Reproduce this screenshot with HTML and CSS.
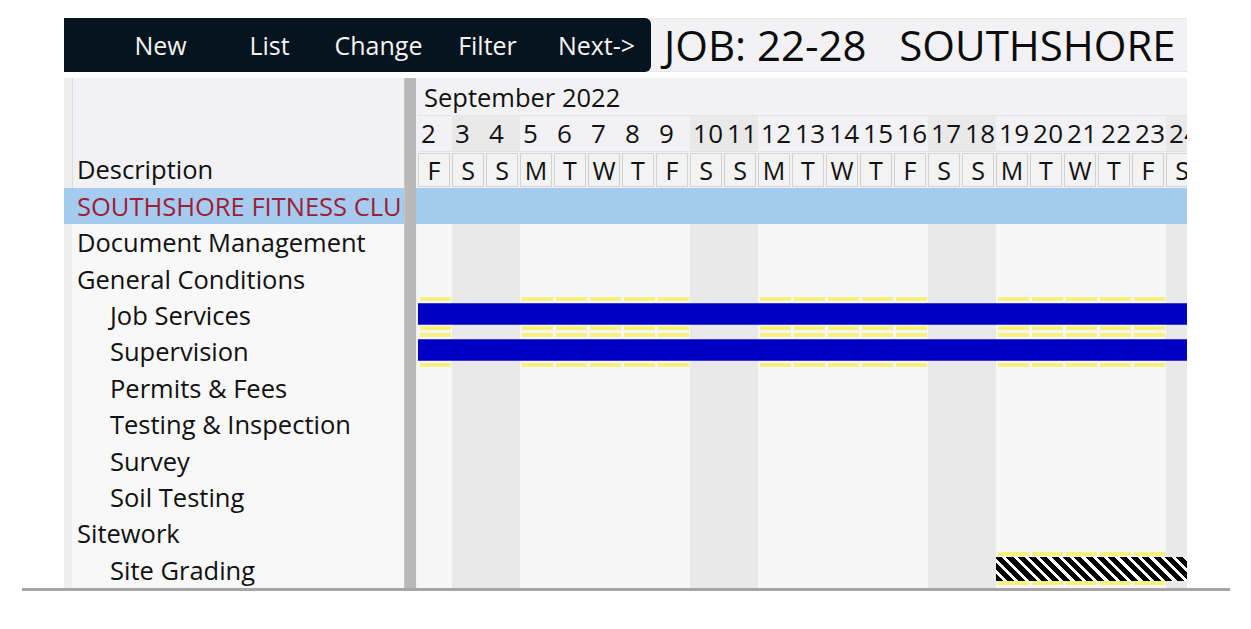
FILE: index.html
```html
<!DOCTYPE html>
<html>
<head>
<meta charset="utf-8">
<link rel="stylesheet" href="styles.css">
</head>
<body>
<div class="app">
  <div class="topbar">
    <div class="toolbar">
      <span class="lead"></span>
      <span class="btn">New</span>
      <span class="btn">List</span>
      <span class="btn">Change</span>
      <span class="btn">Filter</span>
      <span class="btn">Next-&gt;</span>
    </div>
    <div class="title">JOB: 22-28&nbsp;&nbsp; SOUTHSHORE</div>
  </div>
  <div class="grid">
    <div class="left">
      <div class="lhead"><span>Description</span></div>
      <div class="lrow sel">SOUTHSHORE FITNESS CLUB</div>
      <div class="lrow">Document Management</div>
      <div class="lrow">General Conditions</div>
      <div class="lrow sub">Job Services</div>
      <div class="lrow sub">Supervision</div>
      <div class="lrow sub">Permits &amp; Fees</div>
      <div class="lrow sub">Testing &amp; Inspection</div>
      <div class="lrow sub">Survey</div>
      <div class="lrow sub">Soil Testing</div>
      <div class="lrow">Sitework</div>
      <div class="lrow sub">Site Grading</div>
    </div>
    <div class="splitter"></div>
    <div class="chart">
      <div class="month">September 2022</div>
      <div class="days">
        <i>2</i><i class="w">3</i><i class="w">4</i><i>5</i><i>6</i><i>7</i><i>8</i><i>9</i><i class="w">10</i><i class="w">11</i><i>12</i><i>13</i><i>14</i><i>15</i><i>16</i><i class="w">17</i><i class="w">18</i><i>19</i><i>20</i><i>21</i><i>22</i><i>23</i><i class="w">24</i>
      </div>
      <div class="dows">
        <i>F</i><i>S</i><i>S</i><i>M</i><i>T</i><i>W</i><i>T</i><i>F</i><i>S</i><i>S</i><i>M</i><i>T</i><i>W</i><i>T</i><i>F</i><i>S</i><i>S</i><i>M</i><i>T</i><i>W</i><i>T</i><i>F</i><i>S</i>
      </div>
      <div class="row sel"></div>
      <div class="row"><i></i><i class="w"></i><i class="w"></i><i></i><i></i><i></i><i></i><i></i><i class="w"></i><i class="w"></i><i></i><i></i><i></i><i></i><i></i><i class="w"></i><i class="w"></i><i></i><i></i><i></i><i></i><i></i><i class="w"></i></div>
      <div class="row"><i></i><i class="w"></i><i class="w"></i><i></i><i></i><i></i><i></i><i></i><i class="w"></i><i class="w"></i><i></i><i></i><i></i><i></i><i></i><i class="w"></i><i class="w"></i><i></i><i></i><i></i><i></i><i></i><i class="w"></i></div>
      <div class="row"><i class="m"></i><i class="w"></i><i class="w"></i><i class="m"></i><i class="m"></i><i class="m"></i><i class="m"></i><i class="m"></i><i class="w"></i><i class="w"></i><i class="m"></i><i class="m"></i><i class="m"></i><i class="m"></i><i class="m"></i><i class="w"></i><i class="w"></i><i class="m"></i><i class="m"></i><i class="m"></i><i class="m"></i><i class="m"></i><i class="w"></i><b class="bar" style="left:0;width:800px"></b></div>
      <div class="row"><i class="m"></i><i class="w"></i><i class="w"></i><i class="m"></i><i class="m"></i><i class="m"></i><i class="m"></i><i class="m"></i><i class="w"></i><i class="w"></i><i class="m"></i><i class="m"></i><i class="m"></i><i class="m"></i><i class="m"></i><i class="w"></i><i class="w"></i><i class="m"></i><i class="m"></i><i class="m"></i><i class="m"></i><i class="m"></i><i class="w"></i><b class="bar" style="left:0;width:800px"></b></div>
      <div class="row"><i></i><i class="w"></i><i class="w"></i><i></i><i></i><i></i><i></i><i></i><i class="w"></i><i class="w"></i><i></i><i></i><i></i><i></i><i></i><i class="w"></i><i class="w"></i><i></i><i></i><i></i><i></i><i></i><i class="w"></i></div>
      <div class="row"><i></i><i class="w"></i><i class="w"></i><i></i><i></i><i></i><i></i><i></i><i class="w"></i><i class="w"></i><i></i><i></i><i></i><i></i><i></i><i class="w"></i><i class="w"></i><i></i><i></i><i></i><i></i><i></i><i class="w"></i></div>
      <div class="row"><i></i><i class="w"></i><i class="w"></i><i></i><i></i><i></i><i></i><i></i><i class="w"></i><i class="w"></i><i></i><i></i><i></i><i></i><i></i><i class="w"></i><i class="w"></i><i></i><i></i><i></i><i></i><i></i><i class="w"></i></div>
      <div class="row"><i></i><i class="w"></i><i class="w"></i><i></i><i></i><i></i><i></i><i></i><i class="w"></i><i class="w"></i><i></i><i></i><i></i><i></i><i></i><i class="w"></i><i class="w"></i><i></i><i></i><i></i><i></i><i></i><i class="w"></i></div>
      <div class="row"><i></i><i class="w"></i><i class="w"></i><i></i><i></i><i></i><i></i><i></i><i class="w"></i><i class="w"></i><i></i><i></i><i></i><i></i><i></i><i class="w"></i><i class="w"></i><i></i><i></i><i></i><i></i><i></i><i class="w"></i></div>
      <div class="row"><i></i><i class="w"></i><i class="w"></i><i></i><i></i><i></i><i></i><i></i><i class="w"></i><i class="w"></i><i></i><i></i><i></i><i></i><i></i><i class="w"></i><i class="w"></i><i class="m"></i><i class="m"></i><i class="m"></i><i class="m"></i><i class="m"></i><i class="w"></i><b class="bar hatch" style="left:578px;width:240px"></b></div>
    </div>
  </div>
</div>
<div class="baseline"></div>
</body>
</html>
```
FILE: styles.css
```css
* { box-sizing: border-box; }
body {
  margin: 0;
  background: #ffffff;
  font-family: "Open Sans", "Noto Sans", sans-serif;
  color: #111111;
}
.app {
  margin: 18px 0 0 64px;
  width: 1123px;
}
.topbar {
  display: flex;
  height: 54px;
}
.toolbar {
  width: 587px;
  background: #06141f;
  border-radius: 0 6px 6px 0;
  display: flex;
  align-items: center;
  color: #f4f4f4;
  font-size: 25px;
}
.toolbar .lead { width: 42px; }
.toolbar .btn {
  width: 109px;
  text-align: center;
  white-space: nowrap;
}
.title {
  flex: 1;
  background: #f2f2f4;
  border-top: 1px dotted #dcdcdc;
  border-bottom: 1px dotted #dcdcdc;
  font-size: 42px;
  line-height: 52px;
  padding-left: 13px;
  white-space: nowrap;
  overflow: hidden;
  color: #0c0c0c;
}
.grid {
  display: flex;
  margin-top: 6px;
  height: 510px;
}
.left {
  width: 340px;
  background: linear-gradient(to right, #eeeeef 8px, #f8f8f8 8px);
  overflow: hidden;
  font-size: 25.5px;
}
.lhead {
  height: 110px;
  margin-left: 8px;
  background: #f2f2f4;
  display: flex;
  align-items: flex-end;
  padding: 0 0 2px 4px;
  border-left: 1px solid #dedede;
}
.lrow {
  height: 36.36px;
  line-height: 36px;
  margin-left: 8px;
  padding-left: 5px;
  white-space: nowrap;
  overflow: hidden;
}
.lrow.sub { padding-left: 38px; }
.lrow.sel {
  background: #a6cbf0;
  color: #9e1f35;
  margin-left: 0;
  padding-left: 13px;
}
.splitter {
  width: 12px;
  background: #b9b9b9;
  border-left: 1px solid #c8c8c8;
}
.chart {
  flex: 1;
  overflow: hidden;
  background: #f2f2f4;
  padding-left: 2px;
}
.month {
  height: 38px;
  line-height: 38px;
  font-size: 25.5px;
  padding-left: 6px;
  border-bottom: 1px dotted #d8d8d8;
  white-space: nowrap;
}
.days, .dows, .row {
  display: flex;
  width: 782px;
}
.days i, .dows i, .row i {
  font-style: normal;
  flex: 0 0 34px;
  width: 34px;
}
.days { height: 35px; }
.days i {
  font-size: 26px;
  line-height: 35px;
  padding-left: 3px;
  white-space: nowrap;
  letter-spacing: 0.3px;
}
.days i.w { background: #e9e9ea; }
.dows {
  height: 37px;
  padding-top: 1px;
  border-top: 1px solid #e2e2e2;
}
.dows i {
  margin-right: 2px;
  flex-basis: 32px;
  height: 34px;
  border: 1px solid #d2d2d2;
  background: #f3f3f3;
  text-align: center;
  font-size: 25px;
  line-height: 32px;
}
.row {
  position: relative;
  height: 36.36px;
}
.row.sel { background: #a6cbf0; margin-left: -2px; width: 790px; }
.row i {
  position: relative;
  background: #f7f7f7;
}
.row i.w { background: #e9e9e9; }
.row i.m::before, .row i.m::after {
  content: "";
  position: absolute;
  left: 2px;
  right: 1px;
  height: 4px;
  background: #f6f27c;
}
.row i.m::before { top: 0; }
.row i.m::after { bottom: 3px; }
.bar {
  position: absolute;
  top: 6px;
  height: 22px;
  background: #0000c2;
  border-top: 1px solid #3a3ad8;
  border-bottom: 1px solid #3a3ad8;
}
.bar.hatch {
  background: repeating-linear-gradient(45deg, #000000 0 5px, #ffffff 5px 8px);
  border: none;
  top: 5px;
  height: 24px;
}
.row.last-bar { }
.baseline {
  margin-left: 22px;
  width: 1208px;
  height: 3px;
  background: #a6a6a6;
}
```
